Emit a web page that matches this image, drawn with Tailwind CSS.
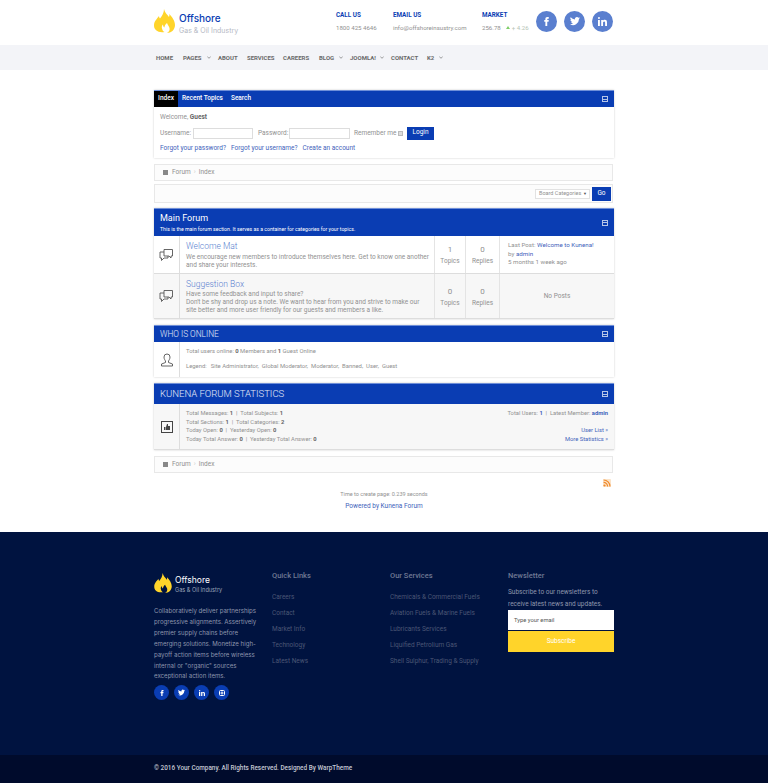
<!DOCTYPE html>
<html lang="en">
<head>
  <meta charset="UTF-8" />
  <title>Offshore - Forum</title>
  <script src="https://cdn.jsdelivr.net/npm/@tailwindcss/browser@4"></script>
</head>
<body class="bg-white font-['Roboto',sans-serif] text-[#919191] overflow-x-hidden">
  <!-- header -->
  <header class="h-[45px] w-[460px] ml-[154px] flex items-center">
    <svg class="w-[21px] h-[24px] -mt-[3px]" viewBox="0 0 21 24"><path fill="#ffd42a" d="M10 0c1 4 3 5 5 8 .5-1 .5-2 .3-3 3 3 5.700 7 5.700 11 0 5-4 8-8 8 2-1 3-3 2.500-5-.5-2-2-3-2.500-5-1.500 1-2.500 3-2.500 4.500-1-.5-1.500-1.500-1.500-3-1 1-1.500 2.500-1 4 .3 1.500 1.200 3 2.500 3.500C4 24 0 21 0 16.500 0 12 3 10 5 7c0-.5 0 1.500 1 2.500C8 7 10 4 10 0z"/></svg>
    <div class="ml-[4px] w-[157px] mt-[3px]">
      <div class="text-[10px] leading-[13px] font-medium text-[#0a3db3] font-['Inter',sans-serif]">Offshore</div>
      <div class="text-[7px] leading-[11px] text-[#b5b9c4] font-['Inter',sans-serif]">Gas &amp; Oil Industry</div>
    </div>
    <div class="w-[57px] -mt-[3px]">
      <div class="text-[6.300px] leading-[9px] font-bold text-[#0a3db3]">CALL US</div>
      <div class="text-[6.100px] leading-[9px] mt-[3px]">1800 425 4646</div>
    </div>
    <div class="w-[89px] -mt-[3px]">
      <div class="text-[6.300px] leading-[9px] font-bold text-[#0a3db3]">EMAIL US</div>
      <div class="text-[6.100px] leading-[9px] mt-[3px]">info@offshoreinsustry.com</div>
    </div>
    <div class="w-[54px] -mt-[3px]">
      <div class="text-[6.300px] leading-[9px] font-bold text-[#0a3db3]">MARKET</div>
      <div class="text-[6.100px] leading-[9px] mt-[3px] flex items-center whitespace-nowrap">256.78<span class="ml-[5px] w-0 h-0 border-x-[2.500px] border-x-transparent border-b-[3px] border-b-[#7fce6a]"></span><span class="ml-[2px] text-[#b5c4b5]">+ 4.26</span></div>
    </div>
    <div class="flex gap-[7px] -mt-[3px]">
      <span class="w-[21px] h-[21px] rounded-full bg-[#5a7fcf] flex items-center justify-center"><svg class="w-[9px] h-[9px]" viewBox="0 0 24 24" fill="#fff"><path d="M14 8V6c0-1 .5-1.500 1.500-1.500H18V0h-3.500C10.500 0 9 2.500 9 5.500V8H6v4.500h3V24h5V12.500h3.500L18 8z"/></svg></span>
      <span class="w-[21px] h-[21px] rounded-full bg-[#5a7fcf] flex items-center justify-center"><svg class="w-[10px] h-[10px]" viewBox="0 0 24 24" fill="#fff"><path d="M24 4.600a10 10 0 0 1-2.800.8 5 5 0 0 0 2.200-2.700 10 10 0 0 1-3.100 1.200 4.900 4.900 0 0 0-8.400 4.500A14 14 0 0 1 1.700 3.200a4.900 4.900 0 0 0 1.500 6.600 5 5 0 0 1-2.200-.6c0 2.400 1.700 4.400 3.900 4.900a5 5 0 0 1-2.200.1 4.900 4.900 0 0 0 4.600 3.400A10 10 0 0 1 0 19.600 14 14 0 0 0 21.500 7.100 10 10 0 0 0 24 4.600z"/></svg></span>
      <span class="w-[21px] h-[21px] rounded-full bg-[#5a7fcf] flex items-center justify-center"><svg class="w-[9px] h-[9px]" viewBox="0 0 24 24" fill="#fff"><path d="M0 8h5v16H0zM2.500 0a2.800 2.800 0 1 1 0 5.600 2.800 2.800 0 0 1 0-5.600zM8.500 8h4.700v2.200c.8-1.400 2.500-2.600 5-2.600 5 0 5.800 3.300 5.800 7.500V24h-5v-7.800c0-1.900 0-4.200-2.600-4.200s-3 2-3 4V24h-4.900z"/></svg></span>
    </div>
  </header>

  <!-- nav -->
  <nav class="h-[25px] bg-[#f3f4f8] pl-[156px] flex items-center text-[6px] font-bold text-[#6a6a6a]">
    <span class="w-[27px]">HOME</span>
    <span class="w-[35px] flex items-center">PAGES<svg class="ml-[5px] w-[4px] h-[3px]" viewBox="0 0 4 3" fill="none" stroke="#777" stroke-width=".7"><path d="M.3.5 2 2.300 3.700.5"/></svg></span>
    <span class="w-[29px]">ABOUT</span>
    <span class="w-[36px]">SERVICES</span>
    <span class="w-[36px]">CAREERS</span>
    <span class="w-[31px] flex items-center">BLOG<svg class="ml-[5px] w-[4px] h-[3px]" viewBox="0 0 4 3" fill="none" stroke="#777" stroke-width=".7"><path d="M.3.5 2 2.300 3.700.5"/></svg></span>
    <span class="w-[41px] flex items-center">JOOMLA!<svg class="ml-[4px] w-[4px] h-[3px]" viewBox="0 0 4 3" fill="none" stroke="#777" stroke-width=".7"><path d="M.3.5 2 2.300 3.700.5"/></svg></span>
    <span class="w-[36px]">CONTACT</span>
    <span class="flex items-center">K2<svg class="ml-[5px] w-[4px] h-[3px]" viewBox="0 0 4 3" fill="none" stroke="#777" stroke-width=".7"><path d="M.3.5 2 2.300 3.700.5"/></svg></span>
  </nav>

  <!-- forum -->
  <main class="w-[460px] ml-[154px] pt-[20px] h-[462px] text-[7px]">
    <section class="shadow-[0_0_2px_#ccc]">
      <div class="h-[17px] bg-[#0a3db3] border-t border-[#6f8fd8] flex items-center text-white text-[6.500px] font-medium">
        <span class="h-full w-[24px] bg-black flex items-center justify-center">Index</span>
        <span class="ml-[4px]">Recent Topics</span>
        <span class="ml-[8px]">Search</span>
        <span class="ml-auto mr-[6px] w-[6px] h-[6px] border border-white/70 flex items-center justify-center"><span class="w-[4px] h-px bg-white/70"></span></span>
      </div>
      <div class="h-[51px] px-[6px] pt-[6px] text-[6.500px]">
        <div class="leading-[9px]">Welcome, <b class="text-[#666]">Guest</b></div>
        <div class="flex items-center mt-[5px] h-[12px]">
          <span class="w-[33px] pt-[1px]">Username:</span><span class="w-[60px] h-[11px] border border-[#ddd] shrink-0"></span>
          <span class="ml-[5px] w-[31px] pt-[1px]">Password:</span><span class="w-[61px] h-[11px] border border-[#ddd] shrink-0"></span>
          <span class="ml-[4px] w-[44px] pt-[1px]">Remember me</span><span class="w-[5px] h-[5px] bg-[#ddd] border border-[#bbb]"></span>
          <span class="ml-[4px] w-[27px] h-[13px] bg-[#0a3db3] text-white flex items-center justify-center">Login</span>
        </div>
        <div class="mt-[5px] leading-[9px] text-[#3f63bb] flex gap-[5px]"><span>Forgot your password?</span><span>Forgot your username?</span><span>Create an account</span></div>
      </div>
    </section>

    <div class="mt-[6px] w-[459px] h-[17px] border border-[#e8e8e8] bg-[#fcfcfc] flex items-center pl-[8px] text-[6.500px]">
      <span class="w-[5px] h-[5px] bg-[#888]"></span><span class="ml-[4px]">Forum</span><span class="mx-[3px] text-[#ccc]">›</span><span>Index</span>
    </div>

    <div class="mt-[3px] w-[459px] h-[19px] border border-[#e8e8e8] bg-[#fcfcfc] flex items-center justify-end pr-[1px] text-[5.500px]">
      <span class="w-[55px] h-[10px] border border-[#e2e2e2] bg-white flex items-center pl-[3px] justify-between pr-[2px] whitespace-nowrap">Board Categories <span class="text-[4px] text-[#555]">▼</span></span>
      <span class="ml-[2px] w-[19px] h-[14px] bg-[#0a3db3] text-white text-[6.500px] flex items-center justify-center">Go</span>
    </div>

    <section class="mt-[5px] shadow-[0_0_2px_#ccc]">
      <div class="h-[28px] bg-[#0a3db3] border-t border-[#6f8fd8] flex items-center text-white px-[6px]">
        <div>
          <div class="text-[9px] leading-[11px] mt-[1px]">Main Forum</div>
          <div class="text-[5.200px] leading-[7px] mt-[2px]">This is the main forum section. It serves as a container for categories for your topics.</div>
        </div>
        <span class="ml-auto w-[6px] h-[6px] border border-white/70 flex items-center justify-center"><span class="w-[4px] h-px bg-white/70"></span></span>
      </div>
      <div class="h-[38px] flex border-b border-[#ddd]">
        <div class="w-[26px] border-r border-[#ddd] flex items-center justify-center">
          <svg class="w-[15px] h-[14px]" viewBox="0 0 15 14" fill="none" stroke="#555" stroke-width=".9"><path d="M5 1.500h8.500v6.500h-1.500v2l-2-2H5z" /><path d="M5 4H1v6h1.500v2.500l2.500-2.500h4V8"/></svg>
        </div>
        <div class="w-[254px] pl-[6px] pt-[5px]">
          <div class="text-[8.500px] leading-[11px] font-light text-[#5a7fcf]">Welcome Mat</div>
          <div class="text-[6.500px] leading-[8px] mt-[1px] pr-[2px]">We encourage new members to introduce themselves here. Get to know one another and share your interests.</div>
        </div>
        <div class="w-[32px] border-x border-[#e4e4e4] text-center pt-[9px]"><div class="text-[8px] leading-[10px]">1</div><div class="text-[6.500px] leading-[9px] mt-[2px]">Topics</div></div>
        <div class="w-[34px] border-r border-[#e4e4e4] text-center pt-[9px]"><div class="text-[8px] leading-[10px]">0</div><div class="text-[6.500px] leading-[9px] mt-[2px]">Replies</div></div>
        <div class="pl-[8px] pt-[5px] text-[6.200px] leading-[8.500px]">
          <div>Last Post: <span class="text-[#3f63bb]">Welcome to Kunena!</span></div>
          <div>by <span class="text-[#3f63bb]">admin</span></div>
          <div>5 months 1 week ago</div>
        </div>
      </div>
      <div class="h-[45px] flex bg-[#f7f7f7] border-b border-[#ddd]">
        <div class="w-[26px] border-r border-[#ddd] flex items-center justify-center">
          <svg class="w-[15px] h-[14px]" viewBox="0 0 15 14" fill="none" stroke="#555" stroke-width=".9"><path d="M5 1.500h8.500v6.500h-1.500v2l-2-2H5z" /><path d="M5 4H1v6h1.500v2.500l2.500-2.500h4V8"/></svg>
        </div>
        <div class="w-[254px] pl-[6px] pt-[5px]">
          <div class="text-[8.500px] leading-[10px] font-light text-[#5a7fcf]">Suggestion Box</div>
          <div class="text-[6.500px] leading-[8px] mt-[1px] pr-[8px]">Have some feedback and input to share?<br>Don't be shy and drop us a note. We want to hear from you and strive to make our site better and more user friendly for our guests and members a like.</div>
        </div>
        <div class="w-[32px] border-x border-[#e4e4e4] text-center pt-[13px]"><div class="text-[8px] leading-[10px]">0</div><div class="text-[6.500px] leading-[9px] mt-[2px]">Topics</div></div>
        <div class="w-[34px] border-r border-[#e4e4e4] text-center pt-[13px]"><div class="text-[8px] leading-[10px]">0</div><div class="text-[6.500px] leading-[9px] mt-[2px]">Replies</div></div>
        <div class="flex-1 flex items-center justify-center text-[6.500px] pt-[2px]">No Posts</div>
      </div>
    </section>

    <section class="mt-[6px] shadow-[0_0_2px_#ccc]">
      <div class="h-[17px] bg-[#0a3db3] border-t border-[#6f8fd8] flex items-center text-white/90 text-[8.300px] font-light px-[6px]">
        <span class="mt-[1px]">WHO IS ONLINE</span>
        <span class="ml-auto w-[6px] h-[6px] border border-white/70 flex items-center justify-center"><span class="w-[4px] h-px bg-white/70"></span></span>
      </div>
      <div class="h-[35px] flex">
        <div class="w-[26px] border-r border-[#ddd] flex items-center justify-center">
          <svg class="w-[14px] h-[14px]" viewBox="0 0 14 14" fill="none" stroke="#555" stroke-width=".9"><path d="M4 4a3 3 0 0 1 6 0c0 2-1 3-1.500 4v1.500l4 1.500v2H1.500v-2l4-1.500V8C5 7 4 6 4 4z"/></svg>
        </div>
        <div class="pl-[6px] pt-[5px] text-[5.900px] leading-[9px]">
          <div>Total users online: <b class="text-[#666]">0</b> Members and <b class="text-[#666]">1</b> Guest Online</div>
          <div class="mt-[6px] flex gap-[3px]"><span class="mr-[1px]">Legend:</span><span>Site Administrator,</span><span>Global Moderator,</span><span>Moderator,</span><span>Banned,</span><span>User,</span><span>Guest</span></div>
        </div>
      </div>
    </section>

    <section class="mt-[6px] shadow-[0_0_2px_#ccc]">
      <div class="h-[21px] bg-[#0a3db3] border-t border-[#6f8fd8] flex items-center text-white/90 text-[9.500px] font-light px-[6px]">
        KUNENA FORUM STATISTICS
        <span class="ml-auto w-[6px] h-[6px] border border-white/70 flex items-center justify-center"><span class="w-[4px] h-px bg-white/70"></span></span>
      </div>
      <div class="h-[46px] flex bg-[#f7f7f7] border-b border-[#ddd]">
        <div class="w-[26px] border-r border-[#ddd] flex items-center justify-center">
          <span class="w-[12px] h-[12px] border border-[#444] flex items-center justify-center"><svg class="w-[6px] h-[6px]" viewBox="0 0 6 6" fill="#444"><path d="M0 3h1.500v3H0zM2 3l1-3h1v2h2v4H2z"/></svg></span>
        </div>
        <div class="pl-[6px] pt-[5px] text-[5.800px] leading-[8.500px] flex-1">
          <div>Total Messages: <b class="text-[#666]">1</b> &nbsp;|&nbsp; Total Subjects: <b class="text-[#666]">1</b></div>
          <div>Total Sections: <b class="text-[#666]">1</b> &nbsp;|&nbsp; Total Categories: <b class="text-[#666]">2</b></div>
          <div>Today Open: <b class="text-[#666]">0</b> &nbsp;|&nbsp; Yesterday Open: <b class="text-[#666]">0</b></div>
          <div>Today Total Answer: <b class="text-[#666]">0</b> &nbsp;|&nbsp; Yesterday Total Answer: <b class="text-[#666]">0</b></div>
        </div>
        <div class="pr-[6px] pt-[5px] text-[5.800px] leading-[8.500px] text-right">
          <div>Total Users: <b class="text-[#3f63bb]">1</b> &nbsp;|&nbsp; Latest Member: <b class="text-[#3f63bb]">admin</b></div>
          <div class="mt-[8.500px] text-[#3f63bb]">User List »</div>
          <div class="text-[#3f63bb]">More Statistics »</div>
        </div>
      </div>
    </section>

    <div class="mt-[6px] w-[459px] h-[17px] border border-[#e8e8e8] bg-[#fcfcfc] flex items-center pl-[8px] text-[6.500px]">
      <span class="w-[5px] h-[5px] bg-[#888]"></span><span class="ml-[4px]">Forum</span><span class="mx-[3px] text-[#ccc]">›</span><span>Index</span>
    </div>
    <div class="flex justify-end mt-[6px] pr-[3px]">
      <svg class="w-[8px] h-[8px]" viewBox="0 0 8 8" fill="none"><rect width="8" height="8" fill="#fbe3c8" rx="1"/><circle cx="1.500" cy="6.500" r="1.100" fill="#f08a2c"/><path d="M.6 3.400a4 4 0 0 1 4 4M.6 1a6.400 6.400 0 0 1 6.400 6.400" stroke="#f08a2c" stroke-width="1.200"/></svg>
    </div>
    <div class="text-center text-[5.500px] leading-[8px] mt-[3px]">Time to create page: 0.239 seconds</div>
    <div class="text-center text-[6.500px] leading-[9px] mt-[4px] text-[#3f63bb]">Powered by Kunena Forum</div>
  </main>

  <!-- footer -->
  <footer class="h-[223px] bg-[#001340] pl-[154px] pt-[40px] flex text-[6.500px] text-[#4b5675]">
    <div class="w-[118px]">
      <div class="flex items-center h-[21px]">
        <svg class="w-[18px] h-[20px]" viewBox="0 0 21 24"><path fill="#ffd42a" d="M10 0c1 4 3 5 5 8 .5-1 .5-2 .3-3 3 3 5.700 7 5.700 11 0 5-4 8-8 8 2-1 3-3 2.500-5-.5-2-2-3-2.500-5-1.500 1-2.500 3-2.500 4.500-1-.5-1.500-1.500-1.500-3-1 1-1.500 2.500-1 4 .3 1.500 1.200 3 2.500 3.500C4 24 0 21 0 16.500 0 12 3 10 5 7c0-.5 0 1.500 1 2.500C8 7 10 4 10 0z"/></svg>
        <div class="ml-[3px] mt-[3px] font-['Inter',sans-serif]"><div class="text-[8.500px] leading-[10px] text-white">Offshore</div><div class="text-[5.600px] leading-[8px] mt-[1px] text-[#9aa3b8]">Gas &amp; Oil Industry</div></div>
      </div>
      <p class="mt-[13px] leading-[10.900px] text-[6.100px] whitespace-nowrap text-[#8e96ad] font-['Inter',sans-serif]">Collaboratively deliver partnerships<br>progressive alignments. Assertively<br>premier supply chains before<br>emerging solutions. Monetize high-<br>payoff action items before wireless<br>internal or "organic" sources<br>exceptional action items.</p>
      <div class="flex gap-[5px] mt-[3px]">
        <span class="w-[15px] h-[15px] rounded-full bg-[#0a3db3] flex items-center justify-center"><svg class="w-[6px] h-[6px]" viewBox="0 0 24 24" fill="#fff"><path d="M14 8V6c0-1 .5-1.500 1.500-1.500H18V0h-3.500C10.500 0 9 2.500 9 5.500V8H6v4.500h3V24h5V12.500h3.500L18 8z"/></svg></span>
        <span class="w-[15px] h-[15px] rounded-full bg-[#0a3db3] flex items-center justify-center"><svg class="w-[7px] h-[7px]" viewBox="0 0 24 24" fill="#fff"><path d="M24 4.600a10 10 0 0 1-2.800.8 5 5 0 0 0 2.200-2.700 10 10 0 0 1-3.100 1.200 4.900 4.900 0 0 0-8.400 4.500A14 14 0 0 1 1.700 3.200a4.900 4.900 0 0 0 1.500 6.600 5 5 0 0 1-2.200-.6c0 2.400 1.700 4.400 3.900 4.900a5 5 0 0 1-2.200.1 4.900 4.900 0 0 0 4.600 3.400A10 10 0 0 1 0 19.600 14 14 0 0 0 21.500 7.100 10 10 0 0 0 24 4.600z"/></svg></span>
        <span class="w-[15px] h-[15px] rounded-full bg-[#0a3db3] flex items-center justify-center"><svg class="w-[6px] h-[6px]" viewBox="0 0 24 24" fill="#fff"><path d="M0 8h5v16H0zM2.500 0a2.800 2.800 0 1 1 0 5.600 2.800 2.800 0 0 1 0-5.600zM8.500 8h4.700v2.200c.8-1.400 2.500-2.600 5-2.600 5 0 5.800 3.300 5.800 7.500V24h-5v-7.800c0-1.900 0-4.200-2.600-4.200s-3 2-3 4V24h-4.900z"/></svg></span>
        <span class="w-[15px] h-[15px] rounded-full bg-[#0a3db3] flex items-center justify-center"><svg class="w-[6px] h-[6px]" viewBox="0 0 6 6" fill="none" stroke="#fff" stroke-width="1"><rect x=".5" y=".5" width="5" height="5" rx="1"/><circle cx="3" cy="3" r="1"/></svg></span>
      </div>
    </div>
    <div class="w-[118px]">
      <div class="text-[7.500px] leading-[9px] font-medium text-[#6f7893] mt-[-1px]">Quick Links</div>
      <ul class="mt-[9px] leading-[16.100px]"><li>Careers</li><li>Contact</li><li>Market Info</li><li>Technology</li><li>Latest News</li></ul>
    </div>
    <div class="w-[118px]">
      <div class="text-[7.500px] leading-[9px] font-medium text-[#6f7893] mt-[-1px]">Our Services</div>
      <ul class="mt-[9px] leading-[16.100px]"><li>Chemicals &amp; Commercial Fuels</li><li>Aviation Fuels &amp; Marine Fuels</li><li>Lubricants Services</li><li>Liquified Petrolium Gas</li><li>Shell Sulphur, Trading &amp; Supply</li></ul>
    </div>
    <div class="w-[106px]">
      <div class="text-[7.500px] leading-[9px] font-medium text-[#6f7893] mt-[-1px]">Newsletter</div>
      <p class="mt-[7px] leading-[11.500px] text-[#8e96ad]">Subscribe to our newsletters to receive latest news and updates.</p>
      <div class="h-[20px] bg-white text-[#555] text-[5.800px] flex items-center pl-[6px]">Type your email</div>
      <div class="mt-[1px] h-[21px] bg-[#ffd42a] text-white text-[6.500px] flex items-center justify-center">Subscribe</div>
    </div>
  </footer>
  <div class="h-[28px] bg-[#000b2c] pl-[154px] flex items-center text-[6.400px] font-medium text-[#c5c9d4]">© 2016 Your Company. All Rights Reserved. Designed By WarpTheme</div>
</body>
</html>
